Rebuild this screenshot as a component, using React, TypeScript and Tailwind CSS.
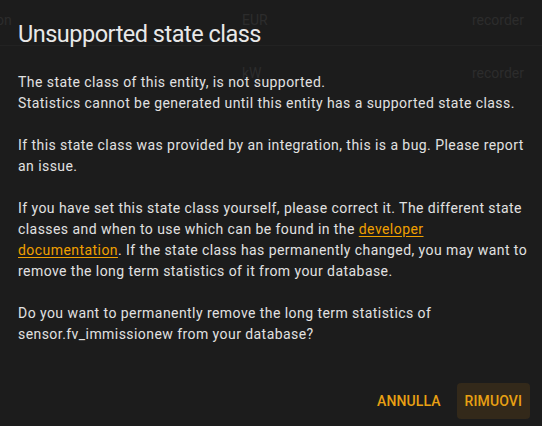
import React from "react";

export default function App() {
  return (
    <div
      className="relative w-[542px] h-[426px] overflow-hidden bg-[#1c1c1c] text-[#e1e1e1]"
      style={{ fontFamily: "Roboto, 'Liberation Sans', sans-serif" }}
    >
      {/* faint background table showing through the dialog scrim */}
      <div className="pointer-events-none absolute inset-0 text-[14px] text-[#2c2c2c]">
        <span className="absolute left-[-4px] top-[10px]">on</span>
        <span className="absolute left-[242px] top-[10px]">EUR</span>
        <span className="absolute left-[472px] top-[10px]">recorder</span>
        <div className="absolute left-0 right-0 top-[45px] h-px bg-[#222222]" />
        <span className="absolute left-[242px] top-[63px]">kW</span>
        <span className="absolute left-[472px] top-[63px]">recorder</span>
      </div>

      <div className="relative flex flex-col pt-[20px]">
        <h2 className="pl-[18px] pr-4 text-[23.5px] leading-[28px] font-normal tracking-[-0.5px] text-[#e8e8e8]">
          Unsupported state class
        </h2>

        <div className="mt-[24px] flex flex-col gap-[21px] pl-[18px] pr-[14px] text-[14px] leading-[21px] tracking-[0.44px]">
          <p>
            The state class of this entity, is not supported.
            <br />
            Statistics cannot be generated until this entity has a supported state class.
          </p>
          <p>
            If this state class was provided by an integration, this is a bug. Please report an issue.
          </p>
          <p>
            If you have set this state class yourself, please correct it. The different state classes and
            when to use which can be found in the{" "}
            <a href="#" className="text-[#f0a000] underline underline-offset-2">
              developer
              <br />
              documentation
            </a>
            . If the state class has permanently changed, you may want to remove the long term statistics of
            it from your database.
          </p>
          <p>
            Do you want to permanently remove the long term statistics of
            <br />
            sensor.fv_immissionew from your database?
          </p>
        </div>

        <div className="mt-[38px] flex justify-end gap-[8px] pr-[12px]">
          <button className="h-[36px] rounded-[4px] px-[8px] text-[14px] font-medium uppercase tracking-[0.1px] text-[#e8a013]">
            Annulla
          </button>
          <button className="h-[36px] rounded-[4px] bg-[#33291a] px-[8px] text-[14px] font-medium uppercase tracking-[0.1px] text-[#e8a013]">
            Rimuovi
          </button>
        </div>
      </div>
    </div>
  );
}
